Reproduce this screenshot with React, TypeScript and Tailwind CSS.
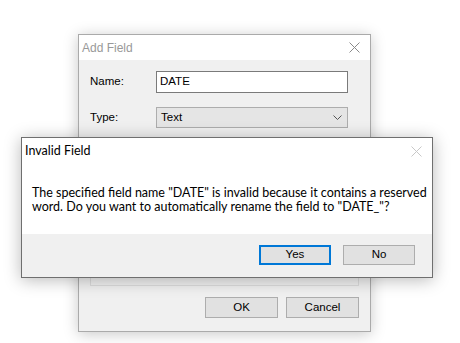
import React from 'react'

const ui = { fontFamily: '"Liberation Sans", Arial, sans-serif' }
const segoe = { fontFamily: 'Lato, "Noto Sans", sans-serif' }

function CloseX({ className = '' }: { className?: string }) {
  return (
    <svg width="11" height="11" viewBox="0 0 11 11" className={className}>
      <path d="M0.5 0.5 L10.5 10.5 M10.5 0.5 L0.5 10.5" stroke="currentColor" strokeWidth="1" fill="none" />
    </svg>
  )
}

function WinButton({ label, focused = false, className = '' }: { label: string; focused?: boolean; className?: string }) {
  return (
    <div
      className={`flex items-center justify-center bg-[#e1e1e1] text-[11.5px] text-black ${
        focused ? 'border-2 border-[#0078d7]' : 'border border-[#adadad]'
      } ${className}`}
    >
      {label}
    </div>
  )
}

// 背后的 Add Field 对话框（非活动）
function AddFieldDialog() {
  return (
    <div
      className="absolute left-[78px] top-[34px] w-[293px] h-[298px] border border-[#aaaaaa] bg-[#f0f0f0] shadow-[0_2px_14px_rgba(0,0,0,0.22)] flex flex-col"
      style={ui}
    >
      <div className="h-[25px] bg-white flex items-center justify-between pl-[3px] pr-[10px]">
        <span className="text-[12px] text-[#999999]">Add Field</span>
        <CloseX className="text-[#8a8a8a]" />
      </div>
      <div className="flex-1 flex flex-col px-[11px] pt-[11px]">
        <div className="flex items-center h-[22px]">
          <span className="w-[66px] text-[11.5px] text-black">Name:</span>
          <div className="w-[192px] h-[22px] border border-[#7a7a7a] bg-white flex items-center px-[3px] text-[11.5px] text-black">
            DATE
          </div>
        </div>
        <div className="flex items-center h-[21px] mt-[14px]">
          <span className="w-[66px] text-[11.5px] text-black">Type:</span>
          <div className="w-[192px] h-[21px] border border-[#adadad] bg-[#e5e5e5] flex items-center justify-between pl-[4px] pr-[5px] text-[11.5px] text-black">
            <span>Text</span>
            <svg width="9" height="5" viewBox="0 0 9 5">
              <path d="M0.5 0.5 L4.5 4.5 L8.5 0.5" stroke="#555" strokeWidth="1" fill="none" />
            </svg>
          </div>
        </div>
        <div className="mt-[12px] w-[269px] h-[146px] border border-[#dcdcdc]" />
        <div className="flex justify-end gap-[8px] mt-[11px] w-[269px]">
          <WinButton label="OK" className="w-[73px] h-[21px]" />
          <WinButton label="Cancel" className="w-[73px] h-[21px]" />
        </div>
      </div>
    </div>
  )
}

// 前面的 Invalid Field 消息框（活动）
function InvalidFieldDialog() {
  return (
    <div
      className="absolute left-[21px] top-[137px] w-[412px] h-[141px] border border-[#6f6f6f] bg-white shadow-[0_2px_16px_rgba(0,0,0,0.28)] flex flex-col"
      style={segoe}
    >
      <div className="h-[26px] flex items-center justify-between pl-[3px] pr-[10px]">
        <span className="text-[12.5px] text-black">Invalid Field</span>
        <CloseX className="text-[#c8c8c8]" />
      </div>
      <div className="flex-1 px-[10px] pt-[22px] text-[12.5px] leading-[14px] text-black whitespace-nowrap">
        <div>The specified field name "DATE" is invalid because it contains a reserved</div>
        <div>word. Do you want to automatically rename the field to "DATE_"?</div>
      </div>
      <div className="h-[43px] bg-[#f0f0f0] flex justify-end items-start pt-[11px] pr-[17px] gap-[12px]" style={ui}>
        <WinButton label="Yes" focused className="w-[72px] h-[20px]" />
        <WinButton label="No" className="w-[72px] h-[20px]" />
      </div>
    </div>
  )
}

export default function App() {
  return (
    <div className="relative w-[460px] h-[343px] bg-white overflow-hidden">
      <AddFieldDialog />
      <InvalidFieldDialog />
    </div>
  )
}
